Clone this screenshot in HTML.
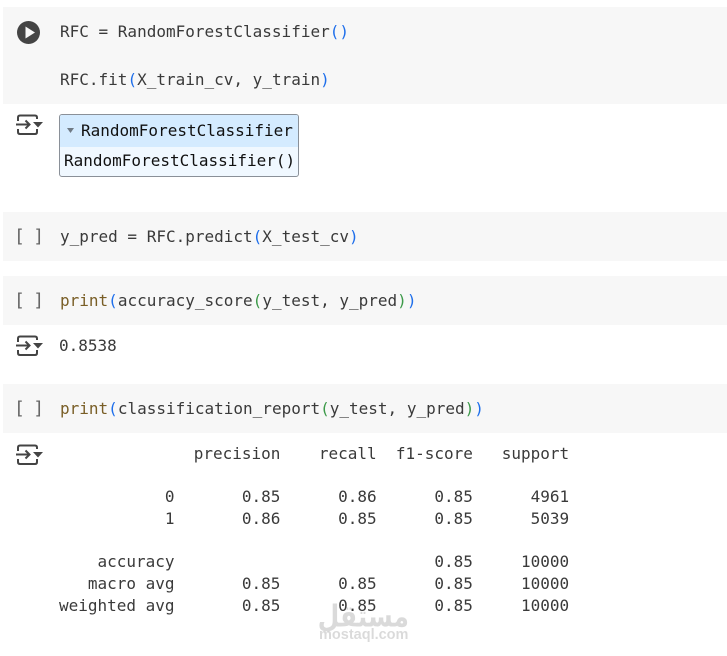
<!DOCTYPE html>
<html><head><meta charset="utf-8">
<style>
html,body{margin:0;padding:0;background:#fff}
body{width:727px;height:656px;position:relative;overflow:hidden;font-family:"DejaVu Sans Mono",monospace;font-size:16px;color:#3a3a3a}
.cell{position:absolute;left:3px;width:724px;background:#f7f7f7}
.t{position:absolute;white-space:pre;line-height:22px;height:22px}
.b{color:#1f6feb}.g{color:#3d9a4a}.p{color:#795e26}
.br{color:#666;font-size:18px;letter-spacing:-1.200px}
pre{position:absolute;margin:0;left:59px;top:443px;font:inherit;line-height:21.660px;color:#3a3a3a;letter-spacing:-.008px}
svg{position:absolute}
.box{position:absolute;left:59px;top:114px;width:238px;height:61px;border:1px solid #8a9098;border-radius:3px;background:#f0f8ff;overflow:hidden}
.box .h{position:absolute;left:0;top:0;width:100%;height:32px;background:#d4ebff}
</style></head><body>
<div class="cell" style="top:7px;height:97px"></div>
<div class="cell" style="top:212px;height:49px"></div>
<div class="cell" style="top:276px;height:49px"></div>
<div class="cell" style="top:384px;height:49px"></div>

<svg style="left:16px;top:20px" width="25" height="25" viewBox="0 0 25 25"><circle cx="12.500" cy="12.500" r="11.500" fill="#444"/><path d="M9.500 6.500L19 12.500L9.500 18.500Z" fill="#f7f7f7"/></svg>
<div class="t" style="left:60px;top:21px">RFC = RandomForestClassifier<span class="b">()</span></div>
<div class="t" style="left:60px;top:69px">RFC.fit<span class="b">(</span>X_train_cv, y_train<span class="b">)</span></div>

<svg style="left:16px;top:114px" width="28" height="22" viewBox="0 0 28 22"><g fill="none" stroke="#444" stroke-width="2"><path d="M2 7V3.500Q2 1.500 4 1.500H19Q21 1.500 21 3.500V5M2 15V18Q2 20 4 20H19Q21 20 21 18V15"/><path d="M0 10.500H13M9.500 6.500L13.500 10.500L9.500 14.500"/></g><path d="M17 8H27L22 13.500Z" fill="#444"/></svg>
<div class="box"><div class="h"></div>
<svg style="left:7px;top:13px" width="7" height="5" viewBox="0 0 7 5"><path d="M0 0H7L3.500 5Z" fill="#6f7a85"/></svg>
<div class="t" style="left:21px;top:5px;color:#111">RandomForestClassifier</div>
<div class="t" style="left:4px;top:35px;color:#111">RandomForestClassifier()</div>
</div>

<div class="t br" style="left:14px;top:226px">[ ]</div>
<div class="t" style="left:60px;top:226px">y_pred = RFC.predict<span class="b">(</span>X_test_cv<span class="b">)</span></div>

<div class="t br" style="left:14px;top:290px">[ ]</div>
<div class="t" style="left:60px;top:290px"><span class="p">print</span><span class="b">(</span>accuracy_score<span class="g">(</span>y_test, y_pred<span class="g">)</span><span class="b">)</span></div>

<svg style="left:16px;top:335px" width="28" height="22" viewBox="0 0 28 22"><g fill="none" stroke="#444" stroke-width="2"><path d="M2 7V3.500Q2 1.500 4 1.500H19Q21 1.500 21 3.500V5M2 15V18Q2 20 4 20H19Q21 20 21 18V15"/><path d="M0 10.500H13M9.500 6.500L13.500 10.500L9.500 14.500"/></g><path d="M17 8H27L22 13.500Z" fill="#444"/></svg>
<div class="t" style="left:59px;top:335px">0.8538</div>

<div class="t br" style="left:14px;top:398px">[ ]</div>
<div class="t" style="left:60px;top:398px"><span class="p">print</span><span class="b">(</span>classification_report<span class="g">(</span>y_test, y_pred<span class="g">)</span><span class="b">)</span></div>

<svg style="left:16px;top:444px" width="28" height="22" viewBox="0 0 28 22"><g fill="none" stroke="#444" stroke-width="2"><path d="M2 7V3.500Q2 1.500 4 1.500H19Q21 1.500 21 3.500V5M2 15V18Q2 20 4 20H19Q21 20 21 18V15"/><path d="M0 10.500H13M9.500 6.500L13.500 10.500L9.500 14.500"/></g><path d="M17 8H27L22 13.500Z" fill="#444"/></svg>
<pre>              precision    recall  f1-score   support

           0       0.85      0.86      0.85      4961
           1       0.86      0.85      0.85      5039

    accuracy                           0.85     10000
   macro avg       0.85      0.85      0.85     10000
weighted avg       0.85      0.85      0.85     10000</pre>

<div class="t" style="left:321px;top:604px;width:88px;height:26px;line-height:26px;text-align:center;font-family:'DejaVu Sans',sans-serif;font-weight:bold;font-size:25px;color:#000;opacity:.14;transform:scaleY(1.200)" dir="rtl">مستقل</div>
<div class="t" style="left:319px;top:626px;width:88px;text-align:center;font-family:'Liberation Sans',sans-serif;font-weight:bold;font-size:14.500px;line-height:18px;color:#000;opacity:.14">mostaql.com</div>
</body></html>
